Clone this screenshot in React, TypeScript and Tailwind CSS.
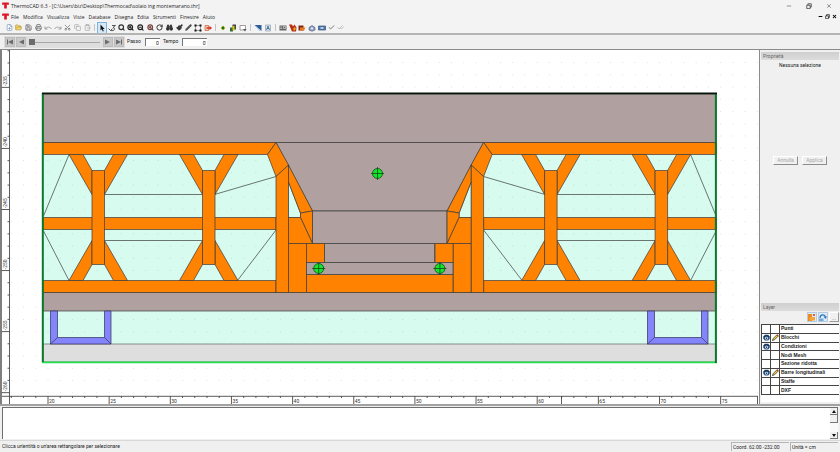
import React from "react";
import {
  FilePlus, FolderOpen, Save, Printer, Scissors, Copy, ClipboardPaste,
  ZoomIn, ZoomOut, RotateCw, Binoculars, Pen, Paintbrush, Check, CheckCheck,
  Minus, X, Search,
} from "lucide-react";

type Tool = { label: string; icon: React.ReactNode; active?: boolean };

const ico = "size-[7px]";

const fileTools: Tool[] = [
  { label: "Nuovo", icon: <FilePlus className={ico + " fill-white text-[#5b86b0]"} /> },
  { label: "Apri", icon: <FolderOpen className={ico + " fill-[#f4d66a] text-[#a88a2c]"} /> },
  { label: "Salva", icon: <Save className={ico + " text-[#777]"} strokeWidth={3} /> },
  { label: "Stampa", icon: <Printer className={ico + " text-[#777]"} strokeWidth={3} /> },
  {
    label: "Annulla",
    icon: (
      <svg viewBox="0 0 8 8" className="size-2" fill="none" stroke="#999" strokeWidth=".9">
        <path d="M1 2.500v2.500h2.500M1 5C3 2.500 6 2.500 7.500 5" />
      </svg>
    ),
  },
  {
    label: "Ripeti",
    icon: (
      <svg viewBox="0 0 8 8" className="size-2" fill="none" stroke="#999" strokeWidth=".9">
        <path d="M7 2.500v2.500H4.500M7 5C5 2.500 2 2.500.5 5" />
      </svg>
    ),
  },
  { label: "Taglia", icon: <Scissors className={ico + " -rotate-90 text-[#888]"} strokeWidth={3} /> },
  { label: "Copia", icon: <Copy className={ico + " text-[#999]"} /> },
  { label: "Incolla", icon: <ClipboardPaste className={ico + " text-[#999]"} /> },
];

const viewTools: Tool[] = [
  {
    label: "Seleziona",
    active: true,
    icon: (
      <svg viewBox="0 0 8 8" className="size-2">
        <path d="M2.500.5v6l1.400-1.300.9 2.300 1-.4-1-2.200h1.800z" fill="#111" />
      </svg>
    ),
  },
  {
    label: "Zoom dinamico",
    icon: (
      <svg viewBox="0 0 8 8" className="size-2" fill="none" stroke="#444" strokeWidth=".9">
        <path d="M.5 4.500 2.500 6.500 4.500 4.500M4 1.500h3.500L5 3.500c2 0 2 2.500.3 3-1 .3-1.800 0-2.800 0" />
      </svg>
    ),
  },
  { label: "Zoom finestra", icon: <Search className={ico + " text-[#333]"} strokeWidth={4} /> },
  { label: "Zoom avanti", icon: <ZoomIn className={ico + " text-[#222]"} strokeWidth={4} /> },
  { label: "Zoom indietro", icon: <ZoomOut className={ico + " text-[#222]"} strokeWidth={4} /> },
  { label: "Zoom tutto", icon: <ZoomIn className={ico + " text-[#744]"} strokeWidth={4} /> },
  { label: "Ridisegna", icon: <RotateCw className={ico + " text-[#222]"} strokeWidth={3} /> },
  { label: "Trova", icon: <Binoculars className={ico + " fill-[#333] text-[#333]"} strokeWidth={3} /> },
  { label: "Pennello", icon: <Paintbrush className={ico + " fill-[#333] text-[#333]"} /> },
  { label: "Penna", icon: <Pen className={ico + " fill-[#555] text-[#444]"} /> },
  {
    label: "Griglia",
    icon: (
      <svg viewBox="0 0 8 8" className="size-2">
        <path d="M1.500 1v6M6.500 1v6M1 1.500h6M1 6.500h6" stroke="#777" strokeWidth=".7" />
        <path d="M.5.5h2v2h-2zM5.500.5h2v2h-2zM.5 5.500h2v2h-2zM5.500 5.500h2v2h-2z" fill="#111" />
      </svg>
    ),
  },
  {
    label: "Esporta",
    icon: (
      <svg viewBox="0 0 8 8" className="size-2">
        <path d="M1 1.500h3.500v5H1z" fill="#f3c9b0" stroke="#c2603a" strokeWidth=".7" />
        <path d="M2.500 3.200h3V1.800L8 4 5.500 6.200V4.800h-3z" fill="#d8351f" />
      </svg>
    ),
  },
];

const meshTools: Tool[] = [
  {
    label: "Punto",
    icon: (
      <svg viewBox="0 0 8 8" className="size-2">
        <path d="M4 1.500 6.500 4 4 6.500 1.500 4z" fill="#d5c81c" />
        <circle cx="4" cy="4" r="1.400" fill="#18701f" />
      </svg>
    ),
  },
  {
    label: "Blocco",
    icon: (
      <svg viewBox="0 0 8 8" className="size-2">
        <path d="M3.500.5h3.500v5H3.500z" fill="#444" />
        <path d="M1 3.500h3v4H1z" fill="#2f6a3a" />
        <path d="M3.500 2h2v4.500h-2z" fill="#d5c81c" />
      </svg>
    ),
  },
  {
    label: "Regione",
    icon: (
      <svg viewBox="0 0 8 8" className="size-2">
        <path d="M1 1.500h5.500v4.500H1z" fill="#fff" stroke="#777" strokeWidth=".7" />
        <path d="M4 5h3.500L6 7.500z" fill="#555" />
      </svg>
    ),
  },
];

const reportTools: Tool[] = [
  {
    label: "Diagramma",
    icon: (
      <svg viewBox="0 0 8 8" className="size-2">
        <path d="M.5 1h7v6z" fill="#2d5c97" />
        <path d="M1 1.500 6 7" stroke="#9fc0e0" strokeWidth=".8" />
      </svg>
    ),
  },
  {
    label: "Relazione",
    icon: (
      <svg viewBox="0 0 8 8" className="size-2">
        <path d="M1.500 1h5v6h-5z" fill="#dfe9f0" stroke="#8aa0b2" strokeWidth=".7" />
        <path d="M2.500 5.800 4 2l1.500 3.800M3 4.600h2" stroke="#1d4a74" strokeWidth=".7" fill="none" />
      </svg>
    ),
  },
];

const calcTools: Tool[] = [
  {
    label: "Dati",
    icon: (
      <svg viewBox="0 0 8 8" className="size-2">
        <path d="M.5 1.500h7v5h-7z" fill="#666" />
        <path d="M1.200 3h2M1.200 4.500h2M4.500 2.500h2v2h-2z" stroke="#e4e4e4" strokeWidth=".6" fill="none" />
      </svg>
    ),
  },
  {
    label: "Incendio",
    icon: (
      <svg viewBox="0 0 8 8" className="size-2">
        <path d="M0 .5h3l1 2 1.500-2L7.500 3.500 7 7.500H3z" fill="#b82d14" />
        <path d="M4 4.500 6 3l1 2-2 2z" fill="#ef9b20" />
      </svg>
    ),
  },
  {
    label: "Materiali",
    icon: (
      <svg viewBox="0 0 8 8" className="size-2">
        <path d="M.5 1.500h5v5h-5z" fill="#7a2616" />
        <path d="M2 3.500h5.500L6 6.500H2z" fill="#e27a1f" />
      </svg>
    ),
  },
  {
    label: "Solido",
    icon: (
      <svg viewBox="0 0 8 8" className="size-2">
        <path d="M1 3.500 4 1.500l3 2V6L4 7.200 1 6z" fill="#8c9cc0" stroke="#5b6786" strokeWidth=".7" />
        <circle cx="4" cy="4.400" r="1.200" fill="#dfe5f2" />
      </svg>
    ),
  },
  {
    label: "Colonne",
    icon: (
      <svg viewBox="0 0 8 8" className="size-2">
        <path d="M.5 2h7v4h-7z" fill="#4f79a8" stroke="#34557c" strokeWidth=".7" />
        <path d="M2.500 3.200h3v1.600h-3z" fill="#cfdff0" />
      </svg>
    ),
  },
  { label: "Verifica", icon: <Check className={ico + " text-[#666]"} strokeWidth={3} /> },
  { label: "Verifica tutto", icon: <CheckCheck className={ico + " text-[#999]"} /> },
];

const menus = ["File", "Modifica", "Visualizza", "Viste", "Database", "Disegna", "Edita", "Strumenti", "Finestre", "Aiuto"];

const layers = [
  { name: "Punti" },
  { name: "Blocchi", visible: true, editable: true },
  { name: "Condizioni", visible: true },
  { name: "Nodi Mesh" },
  { name: "Sezione ridotta" },
  { name: "Barre longitudinali", visible: true, editable: true },
  { name: "Staffe" },
  { name: "DXF" },
];

function Logo() {
  return (
    <svg viewBox="0 0 8 8" className="size-[7px] shrink-0" aria-hidden="true">
      <path d="M.3.5h7.400l.3 2.500H6L5.500 2.500v5H2.500v-5L2 3H0z" fill="#dd1626" />
    </svg>
  );
}

function ToolGroup({ tools, className }: { tools: Tool[]; className: string }) {
  return (
    <div className={"flex items-center justify-between " + className}>
      {tools.map((t) => (
        <button
          key={t.label}
          aria-label={t.label}
          className={
            "flex h-[10px] w-2 items-center justify-center " +
            (t.active ? "bg-[#d5e8f8] outline outline-[#7fb4dc]" : "")
          }
        >
          {t.icon}
        </button>
      ))}
    </div>
  );
}

function Separator() {
  return <span className="mx-[3px] h-[7px] w-px bg-[#c4c4c4]" />;
}

function StepButton({ label, bar, back }: { label: string; bar?: boolean; back?: boolean }) {
  return (
    <button aria-label={label} className="flex h-[10px] w-[10px] items-center justify-center border border-[#bcbcbc] bg-[#c8c8c8]">
      <svg viewBox="0 0 8 6" className={"h-[6px] w-2 " + (back ? "-scale-x-100" : "")}>
        <path d="M1 .5 6 3 1 5.500z" fill="#6c6c6c" />
        {bar && <path d="M6.500.5v5" stroke="#666" />}
      </svg>
    </button>
  );
}

const INK = "#3b3b3b";
const ORANGE = "#ff8200";
const GREY = "#b0a09f";
const AQUA = "#d7fbef";

/* A post with its four diagonal struts, x being the left edge of the post. */
function Post({ x }: { x: number }) {
  return (
    <g transform={`translate(${x} 0)`} fill={ORANGE} stroke={INK} strokeWidth=".7">
      <path d="M-23 154.500h14l9 16v24zM35.500 154.500h-14l-9 16v24z" />
      <path d="M-23 280.500h14l9-16v-24zM35.500 280.500h-14l-9-16v-24z" />
      <path d="M0 170.500h12.500v94H0z" />
    </g>
  );
}

/* Left half of the section; the right half is its mirror image. */
function HalfSection() {
  return (
    <g stroke={INK} strokeWidth=".7" fill={ORANGE}>
      <g fill="none">
        <path d="M69 154.500 43.500 216M43.500 231 69 280.500M104.500 194.500h98M104.500 240.500h98M214.500 194.500 276 176.500M237.500 280.500 276 230" />
      </g>
      <path d="M43 142.500h233l-8.500 12H43z" />
      <path d="M43 217.500h233v12H43z" />
      <path d="M43 280.500h233v12H43z" />
      <Post x={92} />
      <Post x={202.500} />
      <path d="M276 142.500l-8.500 12 8.500 22 12.500-11.500z" />
      <path d="M276 176.500 288.500 165v127.500H276z" />
      <path d="M288.500 182v35.500h12V213z" fill={AQUA} />
      <path d="M288.500 165l24 46-12 2-12-31z" />
      <path d="M312.500 211v32.500l-12-26V213z" />
      <path d="M288.500 217.500h12l12 26h-24z" />
      <path d="M288.500 243.500h18v49h-18z" />
      <path d="M306.500 243.500h18v19h-18z" />
    </g>
  );
}

function Channel({ x }: { x: number }) {
  return (
    <g transform={`translate(${x} 0)`} fill="#8484fb" stroke="#30305c" strokeWidth=".7">
      <path d="M0 311h7v26.500h47V311h6.500v33H0z" />
      <path d="M0 344l7-6.500M60.500 344l-6.500-6.500" />
    </g>
  );
}

function Target({ x, y }: { x: number; y: number }) {
  return (
    <g transform={`translate(${x} ${y})`} stroke="#0c4a12" strokeWidth=".8">
      <circle r="5" fill="#12e52a" />
      <path d="M-6.500 0h13M0-6.500v13" />
    </g>
  );
}

const UNIT = 12.23;
const xTicks = Array.from({ length: 59 }, (_, i) => i + 17);
const yTicks = Array.from({ length: 29 }, (_, i) => i + 232);

function Drawing() {
  return (
    <svg viewBox="0 50 758 354" preserveAspectRatio="xMinYMin meet" className="h-full w-full bg-white" role="img" aria-label="Sezione del solaio">
      <defs>
        <pattern id="dots" x="17.400" y="56.500" width={UNIT} height={UNIT} patternUnits="userSpaceOnUse">
          <rect x="5.600" y="5.600" width="1" height="1" fill="#8a9a92" opacity=".28" />
        </pattern>
      </defs>

      <path d="M43 94h673v268H43z" fill={AQUA} />
      <rect x="11" y="51" width="747" height="344" fill="url(#dots)" />

      <path d="M43 94h673v48.500H43z" fill={GREY} stroke={INK} strokeWidth=".7" />
      <path d="M276 142.500h207.500L447 211H312.500z" fill={GREY} stroke={INK} strokeWidth=".7" />
      <path d="M312.500 211H447v32.500H312.500z" fill={GREY} stroke={INK} strokeWidth=".7" />
      <path d="M324.500 243.500h110v19h-110z" fill={GREY} stroke={INK} strokeWidth=".7" />
      <path d="M43 292.500h673V311H43z" fill={GREY} stroke={INK} strokeWidth=".7" />
      <path d="M43 344h673v18H43z" fill="#dedede" stroke="#666" strokeWidth=".7" />

      <HalfSection />
      <g transform="translate(759.600 0) scale(-1 1)">
        <HalfSection />
      </g>
      <path d="M306.500 274.500H453v18H306.500z" fill={ORANGE} stroke={INK} strokeWidth=".7" />
      <path d="M306.500 262.500H453v12H306.500z" fill={GREY} stroke={INK} strokeWidth=".7" />

      <Channel x={50.500} />
      <Channel x={647.500} />

      <path d="M42 362.300h675" stroke="#22dd4c" strokeWidth="1.700" />
      <path d="M42.800 93v269M715.900 93v270" stroke="#087a2c" strokeWidth="2" />
      <path d="M42 93.400h675" stroke="#08150a" strokeWidth="1.700" />

      <Target x={377.500} y={173.500} />
      <Target x={318.700} y={268.500} />
      <Target x={439.900} y={268.500} />

      <g stroke="#4a4a4a" strokeWidth=".9" fill="none">
        <path d="M1 50v354" stroke="#555" strokeWidth="1.500" />
        <path d="M9.500 50v354M2 396.300h756M561.500 396v8M757.500 396v8" />
        {xTicks.map((u) => {
          const x = 48 + (u - 20) * UNIT;
          return <path key={u} d={`M${x} 396v${u % 5 === 0 ? 8 : 2}`} />;
        })}
        {yTicks.map((u) => {
          const y = 87.400 + (u - 235) * 12.210;
          return <path key={u} d={`M9.500 ${y}h${u % 5 === 0 ? -8 : -2}`} />;
        })}
      </g>
      <g fill="#333" className="font-['Roboto','Liberation_Sans',sans-serif] text-[5px]">
        {xTicks.filter((u) => u % 5 === 0).map((u) => (
          <text key={u} x={49 + (u - 20) * UNIT} y="403">{u}</text>
        ))}
        {yTicks.filter((u) => u % 5 === 0).map((u) => (
          <text key={u} transform={`translate(7 ${86 + (u - 235) * 12.210}) rotate(-90)`}>{-u}</text>
        ))}
      </g>
    </svg>
  );
}

function PanelHeader({ children }: { children: React.ReactNode }) {
  return (
    <h2 className="h-2 bg-linear-to-b from-[#cfcfcf] to-[#dcdcdc] pl-[2px] leading-2 text-[#666]">{children}</h2>
  );
}

function LayerButton({ label, children }: { label: string; children: React.ReactNode }) {
  return (
    <button aria-label={label} className="flex h-[10px] w-[10px] items-center justify-center border border-[#b5cbe0] bg-[#dfeaf4]">
      {children}
    </button>
  );
}

function SidePanel() {
  return (
    <aside className="flex w-[81px] shrink-0 flex-col border-l border-[#8b8b8b] bg-[#f0f0f0] pt-[2px] pr-px pl-px">
      <section className="flex min-h-0 flex-1 flex-col">
        <PanelHeader>Proprietà</PanelHeader>
        <p className="mt-px text-center leading-2 text-[#222]">Nessuna selezione</p>
        <div className="mt-[87px] flex justify-center gap-1">
          {["Annulla", "Applica"].map((b) => (
            <button key={b} disabled className="h-[9px] w-[25px] border border-t-white border-r-[#8c8c8c] border-b-[#8c8c8c] border-l-white leading-[7px] text-[#a8a8a8]">
              {b}
            </button>
          ))}
        </div>
      </section>
      <section className="flex h-[101px] shrink-0 flex-col">
        <PanelHeader>Layer</PanelHeader>
        <div className="mt-px flex justify-end gap-px">
          <LayerButton label="Nuovo layer">
            <svg viewBox="0 0 8 8" className="size-2">
              <path d="M0 1h4v7H0z" fill="#ee8a1c" />
              <path d="M1.500 4h5.500v3.500H1.500z" fill="#f4a63c" />
              <path d="M5 1l2 2M7 1 5 3" stroke="#d33" strokeWidth=".8" />
            </svg>
          </LayerButton>
          <LayerButton label="Aggiorna layer">
            <svg viewBox="0 0 8 8" className="size-2">
              <path d="M1 5C1 1 6 1 6.500 4" stroke="#2e78b8" strokeWidth="1.200" fill="none" />
              <path d="M4.500 3.500H8L6.500 6z" fill="#2e78b8" />
              <path d="M0 5.500h4.500V8H0z" fill="#6fabdc" />
            </svg>
          </LayerButton>
          <button aria-label="Altro" className="flex h-[10px] w-[10px] items-end justify-center border border-white border-r-[#999] border-b-[#999] leading-[6px] text-[#555]">...</button>
        </div>
        <div className="mt-[2px] mb-[2px] flex-1 bg-white font-['Liberation_Sans',Arial,sans-serif]">
          <table className="h-[71px] w-full table-fixed border-collapse">
            <tbody>
              {layers.map((l) => (
                <tr key={l.name}>
                  <td className="w-[9px] border border-[#444] p-0">
                    {l.visible && (
                      <svg viewBox="0 0 8 8" className="mx-auto block size-[7px]" role="img" aria-label="Visibile">
                        <path d="M.3 3 2 .8h4L7.700 3v2.500L6 7.500H2L.3 5.500z" fill="#2d5686" />
                        <path d="M.8 3Q4 .8 7.200 3" stroke="#10202f" fill="none" />
                        <circle cx="4" cy="4.800" r="1.700" fill="#cfe2f4" />
                        <circle cx="4" cy="4.800" r=".8" fill="#112233" />
                      </svg>
                    )}
                  </td>
                  <td className="w-[9px] border border-[#444] p-0">
                    {l.editable && (
                      <svg viewBox="0 0 8 8" className="mx-auto block size-[7px]" role="img" aria-label="Modificabile">
                        <path d="M.5 7.500 1.500 5 5.500 1 7 2.500 3 6.500z" fill="#e8d43a" stroke="#222" strokeWidth=".8" />
                        <path d="M5.200 1.200 7 2.800 7.600 1.600 6.400.4z" fill="#a33" />
                      </svg>
                    )}
                  </td>
                  <td className="border border-r-0 border-[#444] p-0 pl-px leading-[7px] font-bold whitespace-nowrap text-[#222]">{l.name}</td>
                </tr>
              ))}
            </tbody>
          </table>
        </div>
      </section>
    </aside>
  );
}

function RestoreIcon({ className }: { className: string }) {
  return (
    <svg viewBox="0 0 8 8" className={className} fill="none" stroke="currentColor">
      <path d="M1 3h4.500v4.500H1zM2.500 3V1H7v4.500H5.500" />
    </svg>
  );
}

export default function App() {
  return (
    <div className="flex h-screen flex-col overflow-hidden bg-[#f0f0f0] font-['Roboto','Liberation_Sans',sans-serif] text-[5px] text-[#1c1c1c]">
      <header className="flex h-[11px] shrink-0 items-center bg-[#f3f3f3] pr-[8px] pl-[2px]">
        <Logo />
        <h1 className="ml-[2px] flex-1 font-['Open_Sans','Noto_Sans',sans-serif] leading-[10px]">
          ThermoCAD 6.3 - [C:\Users\biz\Desktop\Thermocad\solaio ing montemarano.thr]
        </h1>
        <div className="flex gap-[14px] text-[#333]">
          <button aria-label="Riduci a icona"><Minus className="size-[6px]" /></button>
          <button aria-label="Ripristina"><RestoreIcon className="size-[6px]" /></button>
          <button aria-label="Chiudi"><X className="size-[6px]" /></button>
        </div>
      </header>

      <nav className="flex h-[11px] shrink-0 items-center bg-[#f3f3f3] pr-[3px] pl-[2px]">
        <Logo />
        <div className="ml-[2px] flex flex-1 gap-1 font-['Open_Sans','Noto_Sans',sans-serif] leading-[10px]">
          {menus.map((m) => (
            <button key={m}>{m}</button>
          ))}
        </div>
        <div className="flex gap-[2px] text-black">
          <button aria-label="Riduci documento"><Minus className="size-[5px]" strokeWidth={5} /></button>
          <button aria-label="Ripristina documento"><RestoreIcon className="size-[5px]" /></button>
          <button aria-label="Chiudi documento"><X className="size-[5px]" strokeWidth={5} /></button>
        </div>
      </nav>

      <div className="flex h-[11px] shrink-0 items-center bg-[#f3f3f3] pl-[5px]" role="toolbar" aria-label="Strumenti">
        <ToolGroup tools={fileTools} className="w-[86px]" />
        <Separator />
        <ToolGroup tools={viewTools} className="w-[114px]" />
        <Separator />
        <ToolGroup tools={meshTools} className="w-[28px]" />
        <Separator />
        <ToolGroup tools={reportTools} className="w-[18px]" />
        <Separator />
        <ToolGroup tools={calcTools} className="w-[66px]" />
      </div>

      <div className="flex h-[17px] shrink-0 items-center border-t-2 border-b border-t-[#b4b4b4] border-b-[#8b8b8b] pl-1">
        <div className="flex h-3 items-center bg-[#dedede] px-px">
          <StepButton label="Primo passo" bar back />
          <span className="w-px" />
          <StepButton label="Passo precedente" back />
          <input
            type="range"
            aria-label="Posizione"
            min={0}
            max={100}
            defaultValue={0}
            className="mx-[3px] h-[6px] w-[71px] appearance-none bg-transparent [&::-webkit-slider-runnable-track]:h-px [&::-webkit-slider-runnable-track]:bg-[#a6a6a6] [&::-webkit-slider-thumb]:-mt-[3px] [&::-webkit-slider-thumb]:h-[6px] [&::-webkit-slider-thumb]:w-[6px] [&::-webkit-slider-thumb]:appearance-none [&::-webkit-slider-thumb]:bg-[#6c6c6c]"
          />
          <StepButton label="Passo successivo" />
          <span className="w-px" />
          <StepButton label="Ultimo passo" bar />
        </div>
        <label className="ml-[2px] flex items-center gap-1">
          Passo
          <input defaultValue="0" className="h-2 w-[15px] border-t border-l border-[#777] bg-white pr-px text-right" />
        </label>
        <label className="ml-[3px] flex items-center gap-1">
          Tempo
          <input defaultValue="0'" className="h-2 w-[25px] border-t border-l border-[#777] bg-white pr-px text-right" />
        </label>
      </div>

      <main className="flex min-h-0 flex-1">
        <div className="min-w-0 flex-1">
          <Drawing />
        </div>
        <SidePanel />
      </main>

      <section className="flex h-[36px] shrink-0 border-t-2 border-[#a2a2a2] bg-[#f0f0f0] pt-px pr-[2px] pb-px pl-[2px]">
        <textarea
          aria-label="Messaggi"
          readOnly
          className="block min-w-0 flex-1 resize-none border-t border-l border-[#6f6f6f] bg-white"
        />
        <div className="flex w-2 flex-col border-t border-[#6f6f6f] bg-[#fafafa]">
          <button aria-label="Scorri su" className="flex h-[7px] items-center justify-center border-r border-b border-[#777] bg-[#f0f0f0]">
            <svg viewBox="0 0 4 3" className="h-[3px] w-1"><path d="M0 3 2 0l2 3z" fill="#111" /></svg>
          </button>
          <div className="h-2 border-r border-b border-[#777] bg-[#f0f0f0]" />
          <div className="flex-1" />
          <button aria-label="Scorri giù" className="flex h-[7px] items-center justify-center border-r border-b border-[#777] bg-[#f0f0f0]">
            <svg viewBox="0 0 4 3" className="h-[3px] w-1"><path d="M0 0 2 3l2-3z" fill="#111" /></svg>
          </button>
        </div>
      </section>

      <footer className="flex h-3 shrink-0 items-center gap-px border-t border-[#d8d8d8] pr-[2px] pl-[2px] leading-[9px]">
        <p className="flex-1">Clicca un'entità o un'area rettangolare per selezionare</p>
        <p className="h-[9px] w-[58px] border-t border-l border-[#b5b5b5] pl-px leading-2">Coord. 62.00 -232.00</p>
        <p className="h-[9px] w-[48px] border-t border-l border-[#b5b5b5] pl-px leading-2">Unità = cm</p>
      </footer>
    </div>
  );
}
